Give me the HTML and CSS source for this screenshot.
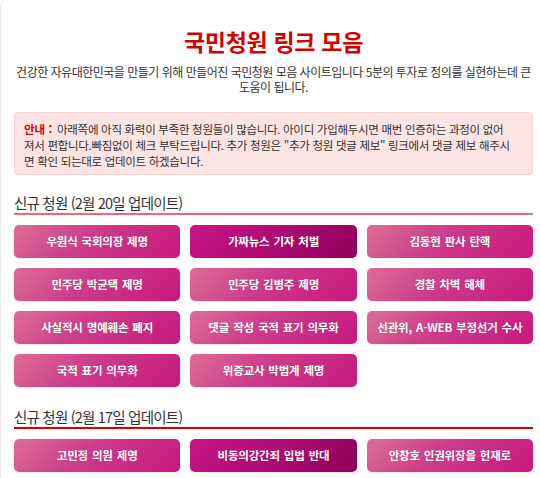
FILE: index.html
```html
<!DOCTYPE html>
<html lang="ko">
<head>
<meta charset="utf-8">
<title>국민청원 링크 모음</title>
<link rel="stylesheet" href="styles.css">
</head>
<body>
<div class="page">
  <h1 class="title">국민청원 링크 모음</h1>
  <p class="intro">건강한 자유대한민국을 만들기 위해 만들어진 국민청원 모음 사이트입니다 5분의 투자로 정의를 실현하는데 큰 도움이 됩니다.</p>
  <div class="notice"><b class="notice-label">안내 :</b> 아래쪽에 아직 화력이 부족한 청원들이 많습니다. 아이디 가입해두시면 매번 인증하는 과정이 없어<br>져서 편합니다.빠짐없이 체크 부탁드립니다. 추가 청원은 "추가 청원 댓글 제보" 링크에서 댓글 제보 해주시<br>면 확인 되는대로 업데이트 하겠습니다.</div>

  <h2 class="section section-soft">신규 청원 (2월 20일 업데이트)</h2>
  <div class="grid">
    <a class="btn">우원식 국회의장 제명</a>
    <a class="btn btn-dark">가짜뉴스 기자 처벌</a>
    <a class="btn">김동현 판사 탄핵</a>
    <a class="btn">민주당 박균택 제명</a>
    <a class="btn">민주당 김병주 제명</a>
    <a class="btn">경찰 차벽 해체</a>
    <a class="btn">사실적시 명예훼손 폐지</a>
    <a class="btn">댓글 작성 국적 표기 의무화</a>
    <a class="btn">선관위, A-WEB 부정선거 수사</a>
    <a class="btn">국적 표기 의무화</a>
    <a class="btn">위증교사 박범계 제명</a>
  </div>

  <h2 class="section section-red">신규 청원 (2월 17일 업데이트)</h2>
  <div class="grid">
    <a class="btn">고민정 의원 제명</a>
    <a class="btn btn-dark">비동의강간죄 입법 반대</a>
    <a class="btn">안창호 인권위장을 헌재로</a>
  </div>
</div>
</body>
</html>
```

FILE: styles.css
```css
html, body {
  margin: 0;
  padding: 0;
  background: #ffffff;
}

body {
  font-family: "Noto Sans CJK KR", "Noto Sans", sans-serif;
  color: #333333;
}

.page {
  border-left: 1px solid #ececec;
  border-top-left-radius: 6px;
  padding: 26px 7px 20px 13px;
  min-height: 478px;
  box-sizing: border-box;
}

.title {
  margin: 0;
  text-align: center;
  font-size: 23px;
  line-height: 30px;
  font-weight: 700;
  letter-spacing: -0.3px;
  color: #d40000;
}

.intro {
  margin: 8px 0 0;
  text-align: center;
  font-size: 12px;
  line-height: 15px;
  letter-spacing: -0.5px;
  color: #333333;
}

.notice {
  margin-top: 18px;
  background: #fde4e4;
  border: 1px solid #f9d3d3;
  border-radius: 4px;
  padding: 8px 4px 5px 9px;
  font-size: 11.5px;
  line-height: 16px;
  letter-spacing: -0.3px;
  color: #333333;
  word-break: break-all;
}

.notice-label {
  color: #dd0000;
  font-weight: 700;
  letter-spacing: 0;
  margin-right: 2px;
}

.section {
  margin: 18px 0 0;
  font-size: 14.5px;
  line-height: 20px;
  font-weight: 400;
  letter-spacing: -0.8px;
  color: #333333;
}

.section-soft {
  border-bottom: 2px solid #e07070;
}

.section-red {
  margin-top: 20px;
  border-bottom: 2px solid #e00000;
}

.grid {
  margin-top: 10px;
  display: grid;
  grid-template-columns: repeat(3, 1fr);
  gap: 10px;
}

.btn {
  display: block;
  height: 33px;
  line-height: 33px;
  border-radius: 5px;
  text-align: center;
  color: #ffffff;
  font-size: 11.5px;
  font-weight: 700;
  letter-spacing: -0.2px;
  word-spacing: 1px;
  text-shadow: 0 0 1px rgba(0, 0, 0, 0.25);
  background: linear-gradient(135deg, #dc6d94 0%, #cc3b8a 45%, #c8177f 100%);
  box-shadow: 0 1px 1px rgba(0, 0, 0, 0.08);
  white-space: nowrap;
  cursor: pointer;
}

.btn-dark {
  background: linear-gradient(135deg, #c81585 0%, #b00c76 45%, #8e005a 100%);
}
```
